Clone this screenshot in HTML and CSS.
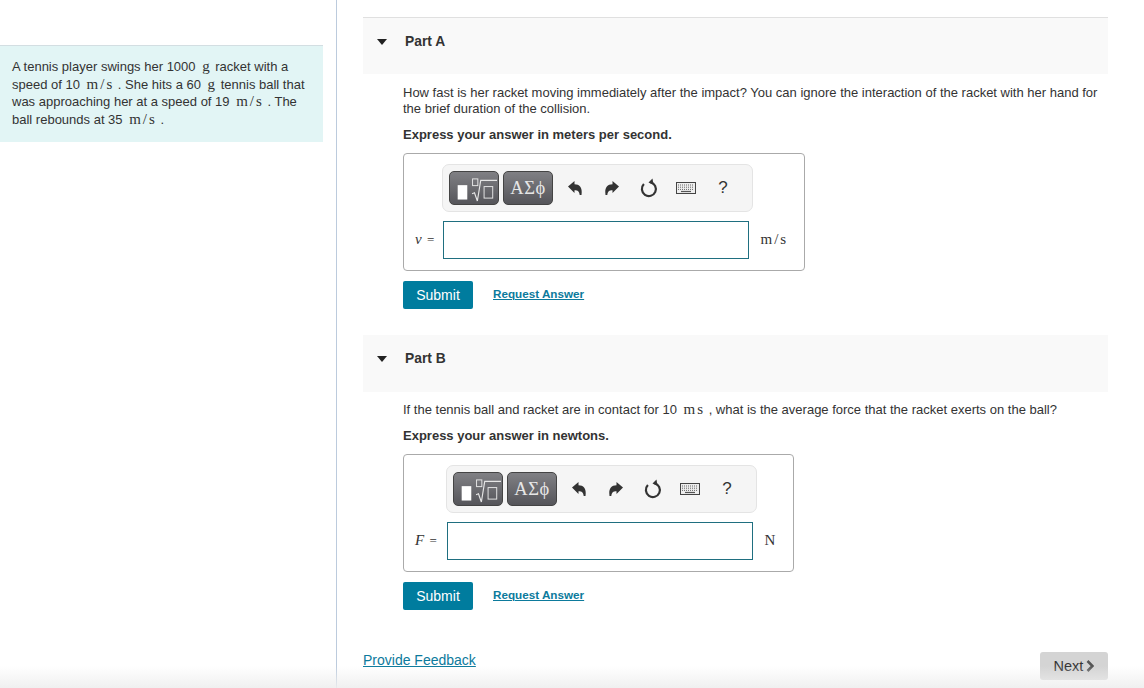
FILE: index.html
```html
<!DOCTYPE html>
<html lang="en">
<head>
<meta charset="utf-8">
<title>Tennis racket collision</title>
<link rel="stylesheet" href="styles.css">
</head>
<body>
<svg class="defs" width="0" height="0" aria-hidden="true">
  <symbol id="i-templates" viewBox="0 0 50 33">
    <rect x="8" y="13" width="10" height="15" fill="#fff"/>
    <rect x="23.500" y="6.500" width="5.500" height="7" fill="none" stroke="#e6e6e6"/>
    <path d="M23 22l2.500-1 3 8.500 3.500-21.500h17" fill="none" stroke="#e6e6e6" stroke-width="1.200"/>
    <rect x="35.500" y="14.500" width="9" height="12" fill="none" stroke="#e6e6e6"/>
  </symbol>
  <symbol id="i-undo" viewBox="0 0 16 16">
    <path d="M1 6.500L7.500 1v3.300c5 0 7.500 3.500 7.200 8.200l-.2 2.500h-1.800c-.5-3.500-1.700-4.700-5.200-4.700V13z" fill="#333"/>
  </symbol>
  <symbol id="i-reload" viewBox="0 0 18 20">
    <path d="M10.500 4.200a7 7 0 1 1-6.600 1.900" fill="none" stroke="#333" stroke-width="2.200"/>
    <path d="M8.500 4.500L12.500 .5l1 6.500z" fill="#333"/>
  </symbol>
  <symbol id="i-keyboard" viewBox="0 0 20 12">
    <rect x=".5" y=".5" width="19" height="11" fill="#eee" stroke="#444"/>
    <path d="M2 3h16M2 5.200h16M2 7.400h16" stroke="#666" stroke-dasharray="1 1"/>
    <path d="M5 9.500h10" stroke="#555" stroke-width="1.200"/>
  </symbol>
</svg>
<div class="page">
  <aside class="sidebar">
    <div class="statement">A tennis player swings her 1000 <span class="math">g</span> racket with a speed of 10 <span class="math">m/s</span> . She hits a 60 <span class="math">g</span> tennis ball that was approaching her at a speed of 19 <span class="math">m/s</span> . The ball rebounds at 35 <span class="math">m/s</span> .</div>
  </aside>
  <main class="main">
    <section class="part">
      <header class="part-head part-head-first"><span class="caret"></span><h2 class="part-title">Part A</h2></header>
      <div class="part-body">
        <p class="prompt">How fast is her racket moving immediately after the impact? You can ignore the interaction of the racket with her hand for the brief duration of the collision.</p>
        <p class="express">Express your answer in meters per second.</p>
        <div class="answer">
          <div class="toolbar">
            <button class="tbtn" type="button"><svg class="i-tpl"><use href="#i-templates"/></svg></button>
            <button class="tbtn tbtn-text" type="button">ΑΣϕ</button>
            <span class="tool"><svg class="i-arrow"><use href="#i-undo"/></svg></span>
            <span class="tool"><svg class="i-arrow flip"><use href="#i-undo"/></svg></span>
            <span class="tool"><svg class="i-reload"><use href="#i-reload"/></svg></span>
            <span class="tool"><svg class="i-kbd"><use href="#i-keyboard"/></svg></span>
            <span class="tool tool-q">?</span>
          </div>
          <label class="var var-v"><i>v</i> =</label>
          <input class="field" type="text" aria-label="v">
          <span class="unit">m/s</span>
        </div>
        <div class="actions"><button class="submit" type="button">Submit</button><a class="request" href="#">Request Answer</a></div>
      </div>
    </section>
    <section class="part part-b">
      <header class="part-head"><span class="caret"></span><h2 class="part-title">Part B</h2></header>
      <div class="part-body part-body-b">
        <p class="prompt">If the tennis ball and racket are in contact for 10 <span class="math">ms</span> , what is the average force that the racket exerts on the ball?</p>
        <p class="express">Express your answer in newtons.</p>
        <div class="answer">
          <div class="toolbar">
            <button class="tbtn" type="button"><svg class="i-tpl"><use href="#i-templates"/></svg></button>
            <button class="tbtn tbtn-text" type="button">ΑΣϕ</button>
            <span class="tool"><svg class="i-arrow"><use href="#i-undo"/></svg></span>
            <span class="tool"><svg class="i-arrow flip"><use href="#i-undo"/></svg></span>
            <span class="tool"><svg class="i-reload"><use href="#i-reload"/></svg></span>
            <span class="tool"><svg class="i-kbd"><use href="#i-keyboard"/></svg></span>
            <span class="tool tool-q">?</span>
          </div>
          <label class="var var-f"><i>F</i> =</label>
          <input class="field" type="text" aria-label="F">
          <span class="unit">N</span>
        </div>
        <div class="actions"><button class="submit" type="button">Submit</button><a class="request" href="#">Request Answer</a></div>
      </div>
    </section>
    <footer class="foot">
      <a class="feedback" href="#">Provide Feedback</a>
      <button class="next" type="button">Next <svg class="i-chev" viewBox="0 0 8 12"><path d="M1.500 1l5 5-5 5" fill="none" stroke="#555" stroke-width="2.600"/></svg></button>
    </footer>
  </main>
</div>
</body>
</html>
```
FILE: styles.css
```css
* { box-sizing: border-box; }
html, body { margin: 0; height: 688px; overflow: hidden; background: #fff; }
body { font-family: "Liberation Sans", Arial, sans-serif; font-size: 13px; color: #333; position: relative; }
body::after {
  content: ""; position: absolute; left: 0; right: 0; bottom: 0; height: 22px;
  background: linear-gradient(rgba(238,238,238,0), rgba(238,238,238,.9));
  pointer-events: none;
}
.defs { position: absolute; }
.page { display: flex; height: 688px; }
.sidebar { width: 337px; flex: none; border-right: 1px solid #bccbdd; padding-top: 45px; }
.statement {
  width: 323px; height: 97px; padding: 12px 12px 0; line-height: 17.6px;
  background: #e2f5f5; border-top: 1px solid #d3dee2;
}
.math { font-family: "Liberation Serif", serif; font-size: 15px; line-height: 0; letter-spacing: 2px; margin: 0 0 0 3px; }
.main { flex: 1; padding: 17px 36px 0 26px; min-width: 0; }
.part-head {
  height: 57px; background: #f9f9f9; display: flex; align-items: flex-start;
  padding-top: 15px;
}
.part-head-first { border-top: 1px solid #e0e0e0; }
.caret {
  width: 0; height: 0; margin: 6px 18px 0 14px;
  border-left: 5.500px solid transparent; border-right: 5.500px solid transparent; border-top: 6px solid #222;
}
.part-title { margin: 0; font-size: 13.800px; line-height: 18px; font-weight: bold; color: #333; }
.part-body { padding: 11px 0 0 40px; }
.part-body-b { padding-top: 10px; }
.prompt { margin: 0; line-height: 16px; }
.express { margin: 10px 0; line-height: 16px; font-weight: bold; }
.answer {
  display: inline-grid; grid-template-columns: auto 306px auto; align-items: center;
  border: 1px solid #aaa; border-radius: 4px; padding: 10px 16px 11px 11px; row-gap: 9px;
  vertical-align: top;
}
.toolbar {
  grid-column: 2; width: 311px; height: 48px; margin-left: -1px;
  display: flex; align-items: center; padding-left: 6px;
  background: #f5f5f5; border: 1px solid #e4e4e4; border-radius: 7px;
}
.tbtn {
  width: 50px; height: 34px; margin: 0 4px 0 0; padding: 0; flex: none;
  border: 1px solid #444; border-radius: 5px;
  background: linear-gradient(#808084, #55555a); color: #e6e6e6;
  display: flex; align-items: center; justify-content: center;
}
.tbtn-text { font-family: "Liberation Serif", serif; font-size: 18.500px; letter-spacing: .5px; margin-right: 3.500px; }
.i-tpl { width: 50px; height: 33px; }
.tool { width: 37px; height: 20px; flex: none; display: flex; align-items: center; justify-content: center; }
.tool-q { font-size: 17px; color: #333; }
.i-arrow { width: 16px; height: 16px; }
.flip { transform: scaleX(-1); }
.i-reload { width: 18px; height: 20px; }
.i-kbd { width: 20px; height: 12px; }
.var { grid-column: 1; grid-row: 2; margin-bottom: 2px; font-family: "Liberation Serif", serif; font-size: 13px; word-spacing: 2px; color: #333; }
.var i { font-size: 15px; }
.var-v { width: 28px; }
.var-f { width: 32px; }
.field { grid-column: 2; grid-row: 2; width: 306px; height: 38px; border: 1px solid #1f6f80; background: #fff; border-radius: 0; padding: 0; }
.unit { grid-column: 3; grid-row: 2; margin: 0 0 2px 11.500px; font-family: "Liberation Serif", serif; font-size: 15px; letter-spacing: 2px; color: #333; }
.actions { display: flex; align-items: flex-start; margin-top: 10px; }
.submit {
  width: 70px; height: 28px; padding: 0; border: 0; border-radius: 2px;
  background: #007c9e; color: #fff; font: 14px "Liberation Sans", Arial, sans-serif;
}
.request { margin: 6px 0 0 20px; font-size: 11.700px; line-height: 14px; font-weight: bold; color: #0c7a9c; }
.part-b { margin-top: 26px; }
.foot { display: flex; justify-content: space-between; align-items: flex-start; margin-top: 42px; }
.feedback { font-size: 14px; line-height: 16px; color: #0c7a9c; }
.next {
  width: 68px; height: 28px; padding: 0; border: 0; border-radius: 3px;
  background: #d4d4d4; color: #333; font: 14.500px "Liberation Sans", Arial, sans-serif;
  display: flex; align-items: center; justify-content: center; gap: 3px;
}
.i-chev { width: 8px; height: 12px; }
```
